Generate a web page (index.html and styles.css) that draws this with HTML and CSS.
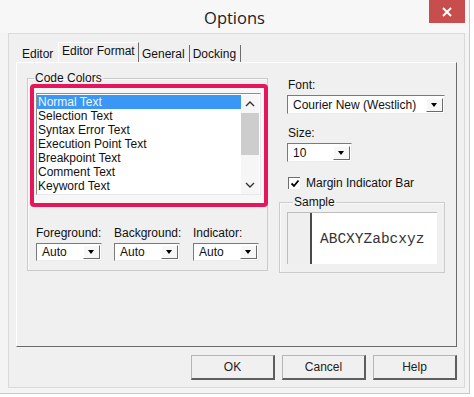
FILE: index.html
```html
<!DOCTYPE html>
<html lang="en">
  <head>
    <meta charset="UTF-8" />
    <title>Options</title>
    <link rel="stylesheet" href="styles.css">
  </head>
  <body>
    <div class="window">
      <div class="titlebar">
        <span class="title">Options</span>
        <button class="close-btn">
          <svg width="12" height="12" viewBox="0 0 12 12"><path d="M2 2L10 10M10 2L2 10" stroke="#fff" stroke-width="2"/></svg>
        </button>
      </div>
      <div class="client">
        <div class="tabs">
          <div class="tab first">Editor</div>
          <div class="tab active">Editor Format</div>
          <div class="tab">General</div>
          <div class="tab">Docking</div>
        </div>
        <div class="panel">
          <div class="left-col">
            <fieldset class="group code-colors">
              <legend>Code Colors</legend>
              <div class="highlight">
                <div class="listbox">
                  <ul class="items">
                    <li class="selected">Normal Text</li>
                    <li>Selection Text</li>
                    <li>Syntax Error Text</li>
                    <li>Execution Point Text</li>
                    <li>Breakpoint Text</li>
                    <li>Comment Text</li>
                    <li>Keyword Text</li>
                  </ul>
                  <div class="scrollbar">
                    <svg class="arrow" width="18" height="18" viewBox="0 0 18 18"><path d="M5 11L9 7L13 11" fill="none" stroke="#333" stroke-width="1.4"/></svg>
                    <div class="thumb"></div>
                    <div class="track"></div>
                    <svg class="arrow" width="18" height="18" viewBox="0 0 18 18"><path d="M5 7L9 11L13 7" fill="none" stroke="#333" stroke-width="1.4"/></svg>
                  </div>
                </div>
              </div>
              <div class="color-row">
                <div class="field">
                  <label>Foreground:</label>
                  <div class="combo small"><span>Auto</span><span class="drop"></span></div>
                </div>
                <div class="field">
                  <label>Background:</label>
                  <div class="combo small"><span>Auto</span><span class="drop"></span></div>
                </div>
                <div class="field">
                  <label>Indicator:</label>
                  <div class="combo small"><span>Auto</span><span class="drop"></span></div>
                </div>
              </div>
            </fieldset>
          </div>
          <div class="right-col">
            <label class="font-label">Font:</label>
            <div class="combo font-combo"><span>Courier New (Westlich)</span><span class="drop"></span></div>
            <label class="size-label">Size:</label>
            <div class="combo size-combo"><span>10</span><span class="drop"></span></div>
            <div class="check-row">
              <span class="checkbox">
                <svg width="10" height="10" viewBox="0 0 10 10"><path d="M1.5 4.5L4 7L8.5 1.5" fill="none" stroke="#000" stroke-width="1.8"/></svg>
              </span>
              <span>Margin Indicator Bar</span>
            </div>
            <fieldset class="group sample">
              <legend>Sample</legend>
              <div class="sample-box">
                <div class="margin-strip"></div>
                <div class="sample-text">ABCXYZabcxyz</div>
              </div>
            </fieldset>
          </div>
        </div>
        <div class="buttons">
          <button class="btn">OK</button>
          <button class="btn">Cancel</button>
          <button class="btn">Help</button>
        </div>
      </div>
    </div>
  </body>
</html>
```
FILE: styles.css
```css
body {
  margin: 0;
  background: #ffffff;
  font-family: "Liberation Sans", Arial, sans-serif;
  font-size: 12px;
  color: #111;
}
.window {
  width: 469px;
  height: 393px;
  background: #f4f4f4;
  border-right: 1px solid #c9c9c9;
  border-bottom: 1px solid #c9c9c9;
  position: relative;
}
.titlebar {
  height: 33px;
  display: flex;
  justify-content: center;
  align-items: center;
  background: #f7f7f7;
}
.title {
  font-family: "Open Sans", "Noto Sans", sans-serif;
  font-size: 16.5px;
  color: #222;
  margin-top: 2px;
}
.close-btn {
  position: absolute;
  left: 429px;
  top: 0;
  width: 36px;
  height: 23px;
  border: none;
  padding: 0;
  background: #c74e4d;
  display: flex;
  align-items: center;
  justify-content: center;
}
.client {
  box-sizing: border-box;
  margin-left: 8px;
  width: 457px;
  height: 355px;
  border: 1px solid #dadada;
  background: #f0f0f0;
  padding: 8px 7px 7px 7px;
}
.tabs {
  display: flex;
  height: 20px;
  align-items: flex-end;
}
.tab {
  box-sizing: border-box;
  height: 17px;
  padding: 0 4px 0 3px;
  line-height: 18px;
  white-space: nowrap;
  border-right: 1px solid #6d6d6d;
}
.tab.first {
  width: 42px;
  padding-left: 6px;
  border-right: none;
}
.tab.active {
  height: 20px;
  line-height: 17px;
  width: 81px;
  padding-left: 3px;
  border-left: 1px solid #ffffff;
  border-top: 1px solid #ffffff;
  border-right: 1px solid #6d6d6d;
}
.panel {
  box-sizing: border-box;
  height: 285px;
  border-top: 1px solid #ffffff;
  border-left: 1px solid #ffffff;
  border-right: 1px solid #6a6a6a;
  border-bottom: 1px solid #6a6a6a;
  padding: 9px 10px 0 10px;
  display: grid;
  grid-template-columns: 241px 166px;
  column-gap: 11px;
  align-items: start;
}
.group {
  margin: 0;
  padding: 0;
  border: 1px solid #cbcbcb;
  box-shadow: inset 1px 1px 0 #fafafa;
  min-width: 0;
}
.group legend {
  padding: 0 1px;
  margin-left: 6px;
  line-height: 12px;
}
.code-colors {
  box-sizing: border-box;
  padding-bottom: 9px;
}
.highlight {
  box-sizing: border-box;
  width: 238px;
  height: 123px;
  margin-left: 2px;
  border: 4px solid #e5175a;
  border-radius: 4px;
  padding: 5px 3px 0 2px;
  background: #f7f7f7;
}
.listbox {
  box-sizing: border-box;
  height: 102px;
  width: 225px;
  display: flex;
  background: #ffffff;
  border-top: 1px solid #8c8c8c;
  border-left: 1px solid #8c8c8c;
  border-right: 1px solid #e8e8e8;
  border-bottom: 1px solid #e8e8e8;
  padding-top: 1px;
}
.items {
  list-style: none;
  margin: 0;
  padding: 0;
  width: 204px;
}
.items li {
  height: 14px;
  line-height: 15px;
  padding-left: 1px;
  white-space: nowrap;
}
.items li.selected {
  background: #3b97f5;
  color: #eef6ff;
}
.scrollbar {
  width: 18px;
  display: flex;
  flex-direction: column;
  background: #f6f6f6;
}
.arrow {
  flex: none;
}
.thumb {
  height: 42px;
  background: #cdcdcd;
  flex: none;
}
.track {
  flex: 1;
}
.color-row {
  display: grid;
  grid-template-columns: 78px 79px 66px;
  margin: 19px 0 0 8px;
}
.field label {
  display: block;
  line-height: 14px;
  margin-bottom: 3px;
}
.combo {
  box-sizing: border-box;
  display: flex;
  align-items: center;
  justify-content: space-between;
  background: #ffffff;
  border-top: 1px solid #7a7a7a;
  border-left: 1px solid #7a7a7a;
  border-right: 1px solid #ececec;
  border-bottom: 1px solid #ececec;
  padding-left: 5px;
  padding-right: 1px;
}
.combo.small {
  width: 66px;
  height: 18px;
}
.drop {
  box-sizing: border-box;
  width: 17px;
  height: 14px;
  background: #f7f7f7;
  border-top: 1px solid #ffffff;
  border-left: 1px solid #ffffff;
  border-right: 1px solid #6a6a6a;
  border-bottom: 1px solid #6a6a6a;
  position: relative;
}
.drop::after {
  content: "";
  position: absolute;
  left: 4px;
  top: 4px;
  border-left: 3.5px solid transparent;
  border-right: 3.5px solid transparent;
  border-top: 4px solid #000;
}
.right-col {
  display: flex;
  flex-direction: column;
  align-items: flex-start;
}
.font-label {
  line-height: 14px;
  margin: 6px 0 3px 9px;
}
.font-combo {
  width: 158px;
  height: 19px;
  margin-left: 8px;
}
.size-label {
  line-height: 14px;
  margin: 12px 0 3px 9px;
}
.size-combo {
  width: 65px;
  height: 19px;
  margin-left: 8px;
}
.check-row {
  display: flex;
  align-items: center;
  margin: 14px 0 0 9px;
  line-height: 14px;
}
.checkbox {
  box-sizing: border-box;
  width: 12px;
  height: 12px;
  background: #ffffff;
  border-top: 1px solid #6e6e6e;
  border-left: 1px solid #6e6e6e;
  margin-right: 6px;
  display: flex;
  align-items: center;
  justify-content: center;
}
.sample {
  width: 166px;
  box-sizing: border-box;
  margin-top: 6px;
  padding: 4px 0 8px 7px;
}
.sample-box {
  width: 150px;
  height: 52px;
  box-sizing: border-box;
  display: flex;
  border-top: 1px solid #bdbdbd;
  border-left: 1px solid #bdbdbd;
  background: #ffffff;
}
.margin-strip {
  width: 22px;
  background: #efefef;
  border-right: 2px solid #4a4a4a;
}
.sample-text {
  font-family: "Liberation Mono", "Courier New", monospace;
  font-size: 14.5px;
  color: #333;
  padding: 18px 0 0 8px;
}
.buttons {
  display: flex;
  justify-content: flex-end;
  gap: 7px;
  margin-top: 8px;
}
.btn {
  box-sizing: border-box;
  width: 84px;
  height: 25px;
  font-family: "Liberation Sans", Arial, sans-serif;
  font-size: 12px;
  color: #222;
  background: #f0f0f0;
  border-top: 1px solid #b5b5b5;
  border-left: 1px solid #b5b5b5;
  border-right: 2px solid #5e5e5e;
  border-bottom: 2px solid #5e5e5e;
  padding: 0;
}
```
